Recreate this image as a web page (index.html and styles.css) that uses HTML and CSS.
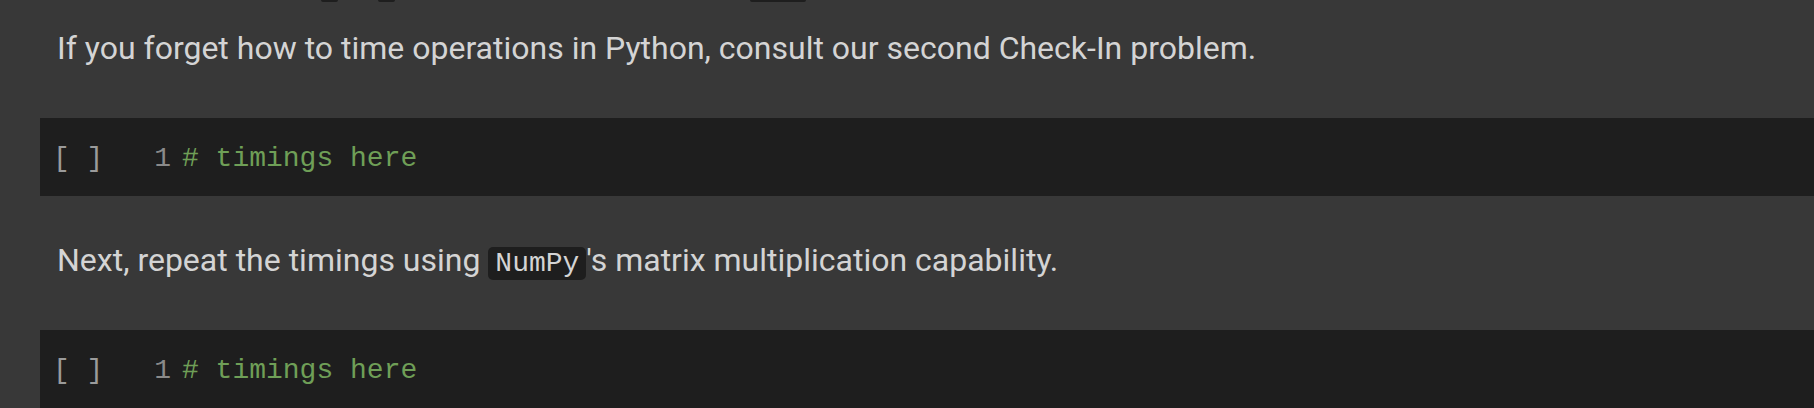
FILE: index.html
```html
<!DOCTYPE html>
<html>
<head>
<meta charset="utf-8">
<link rel="stylesheet" href="styles.css">
</head>
<body>
<div class="notebook">
  <div class="prev-strip">
    <span class="prev-code c1"></span>
    <span class="prev-code c2"></span>
    <span class="prev-code c3"></span>
  </div>
  <div class="md first">
    <p>If you forget how to time operations in Python, consult our second Check-In problem.</p>
  </div>
  <div class="cell">
    <span class="prompt">[ ]</span>
    <span class="lineno">1</span>
    <span class="code"><span class="comment"># timings here</span></span>
  </div>
  <div class="md">
    <p>Next, repeat the timings using <code class="inline">NumPy</code>'s matrix multiplication capability.</p>
  </div>
  <div class="cell last">
    <span class="prompt">[ ]</span>
    <span class="lineno">1</span>
    <span class="code"><span class="comment"># timings here</span></span>
  </div>
</div>
</body>
</html>
```

FILE: styles.css
```css
html, body {
  margin: 0;
  padding: 0;
  background: #383838;
  overflow: hidden;
}

.notebook {
  display: flex;
  flex-direction: column;
  height: 408px;
}

.prev-strip {
  height: 2px;
  display: flex;
  flex-shrink: 0;
}

.prev-code {
  display: block;
  height: 2px;
  background: #1e1e1e;
  border-radius: 0 0 3px 3px;
}

.c1 { margin-left: 321px; width: 17px; }
.c2 { margin-left: 40px; width: 17px; }
.c3 { margin-left: 355px; width: 56px; }

.md {
  padding: 42px 0 48px 57px;
  flex-shrink: 0;
}

.md.first {
  padding-top: 24px;
}

.md p {
  margin: 0;
  font-family: Roboto, "Liberation Sans", sans-serif;
  font-size: 32px;
  line-height: 44px;
  height: 44px;
  color: #d4d4d4;
  white-space: nowrap;
}

.inline {
  font-family: "Liberation Mono", monospace;
  font-size: 28px;
  line-height: 1;
  background: #1e1e1e;
  color: #d4d4d4;
  padding: 1px 7px;
  border-radius: 5px;
}

.cell {
  margin-left: 40px;
  background: #1e1e1e;
  height: 78px;
  box-sizing: border-box;
  padding: 21px 0 0 0;
  display: flex;
  align-items: baseline;
  font-family: "Liberation Mono", monospace;
  font-size: 28px;
  line-height: 40px;
  flex-shrink: 0;
}

.cell.last {
  height: auto;
  flex: 1;
}

.prompt {
  margin-left: 13px;
  width: 80px;
  color: #9b9b9b;
  white-space: pre;
}

.lineno {
  width: 38px;
  text-align: right;
  color: #8a8a8a;
}

.code {
  margin-left: 11px;
  white-space: pre;
}

.comment {
  color: #6f9f57;
}
```
